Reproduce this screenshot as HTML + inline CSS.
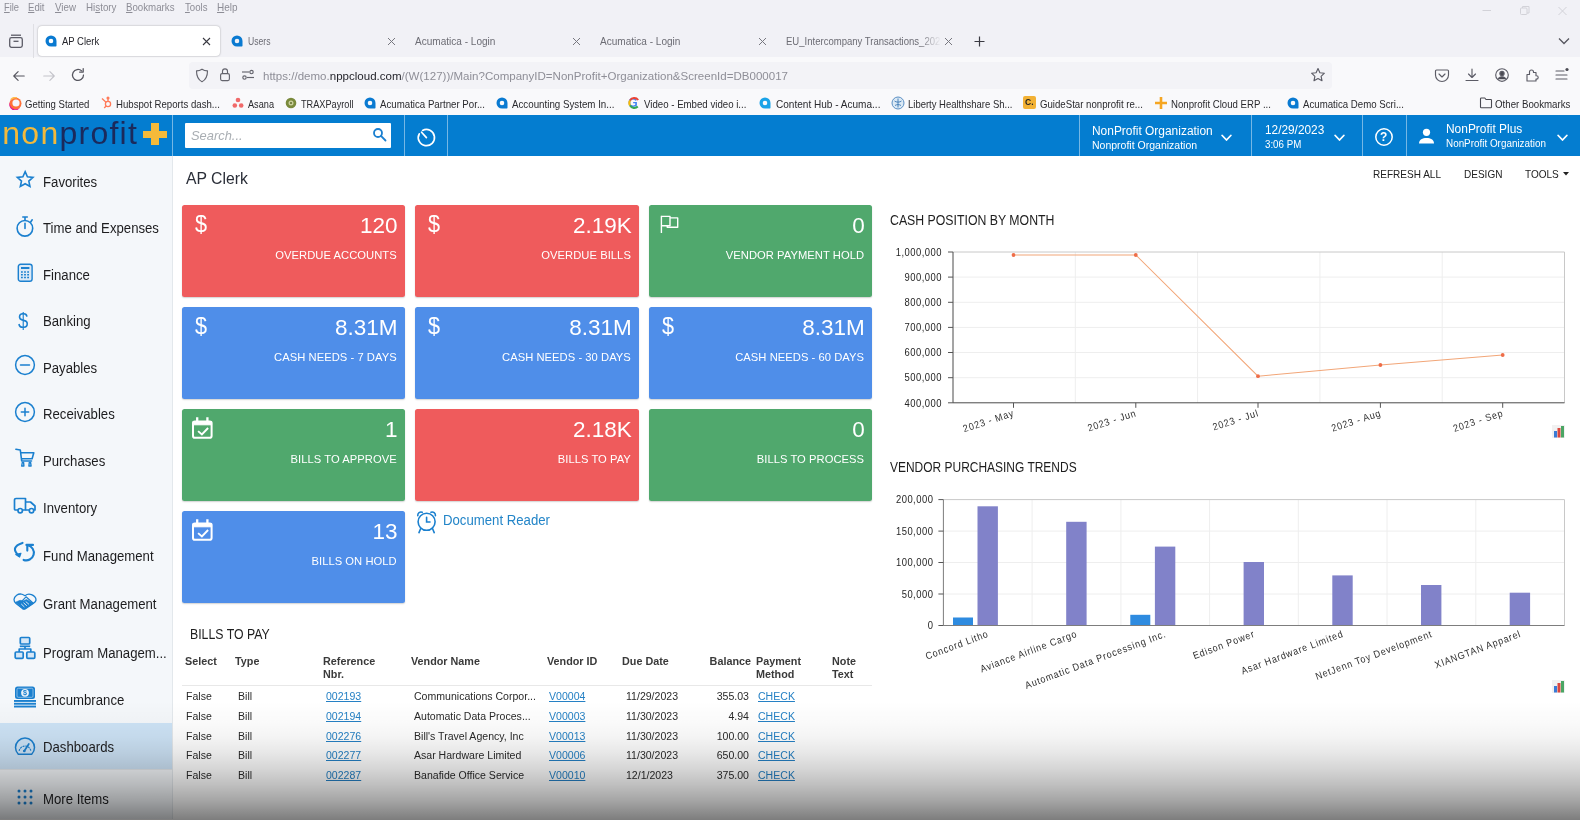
<!DOCTYPE html>
<html lang="en">
<head>
<meta charset="utf-8">
<title>AP Clerk</title>
<style>
*{box-sizing:border-box;margin:0;padding:0}
html,body{width:1580px;height:820px;overflow:hidden;background:#fff}
body{filter:blur(.4px);position:relative;font-family:"Liberation Sans",Arial,sans-serif;color:#222;}
.abs{position:absolute}
.t{position:absolute;white-space:nowrap;line-height:1;transform:scaleX(.955);transform-origin:0 50%}
/* browser chrome */
#chrome{position:absolute;left:0;top:0;width:1580px;height:115px;background:#f1f1f6}
#navbar{position:absolute;left:0;top:57.300px;width:1580px;height:58px;background:#f9f9fb}
#urlbar{position:absolute;left:189px;top:62px;width:1143px;height:27px;border-radius:4px;background:#f3f3f7}
#tab1{position:absolute;left:37.500px;top:25.500px;width:182.500px;height:30px;border-radius:4px;background:#fff;box-shadow:0 0 2px rgba(0,0,0,.35)}
.menu{color:#8d8d96;top:2px}
.tabt{color:#6c6c74;top:37px}
.bm{color:#2a2a2e;top:99.500px}
/* app header */
#hdr{position:absolute;left:0;top:115.400px;width:1580px;height:40.800px;background:#047dd0}
.hsep{position:absolute;top:115.400px;width:1px;height:40.800px;background:rgba(255,255,255,.45)}
.hw{color:#fff}
/* sidebar */
#side{position:absolute;left:0;top:156.200px;width:173px;height:663px;background:#f4f7fa;border-right:1px solid #e3e8ec}
.sit{margin-top:1.600px;font-size:13.800px;color:#1d1d1f;left:42.800px}
#sel{position:absolute;left:0;top:723px;width:172px;height:46px;background:#cde3f6}
/* tiles */
.tile{position:absolute;width:223px;height:92px;border-radius:2.500px;color:#fff;box-shadow:0 1px 1.500px rgba(0,0,0,.18)}
.red{background:#ef5b5c}.grn{background:#50a86d}.blu{background:#4f8ee9}
.tile .v{position:absolute;right:7.500px;top:10px;font-size:22.500px;line-height:1;white-space:nowrap}
.tile .l{position:absolute;right:8.300px;top:45px;font-size:11.200px;letter-spacing:.05px;line-height:1;white-space:nowrap}
.tile svg{position:absolute;left:11px;top:9px}
/* table */
.th{font-size:11.300px;font-weight:bold;color:#3a3a3a;line-height:13px;white-space:nowrap;position:absolute;transform:scaleX(.955);transform-origin:0 50%}
.td{font-size:11.050px;color:#2a2a2a;line-height:1;white-space:nowrap;position:absolute;transform:scaleX(.955);transform-origin:0 50%}
.ra{transform-origin:100% 50%}
.lk{color:#2580c4;text-decoration:underline}
.tb{font-size:10.500px;color:#222}
.tile .ic{left:13px;top:6.500px;font-size:24px;transform:scaleX(.9);transform-origin:left;color:#fff;font-weight:normal}
.hd{font-size:14.300px;color:#1e1e1e;transform:scaleX(.86);transform-origin:left center}
.cl{font-size:10.600px;fill:#262626;letter-spacing:.55px}
.cx{font-size:10px;fill:#2e2e2e;letter-spacing:.9px}
#fade{position:absolute;left:0;top:690px;width:1580px;height:130px;background:linear-gradient(to bottom,rgba(0,0,0,0) 8%,rgba(0,0,0,.018) 24.600%,rgba(0,0,0,.045) 36%,rgba(0,0,0,.095) 48.500%,rgba(0,0,0,.165) 60.800%,rgba(0,0,0,.25) 73%,rgba(0,0,0,.355) 85.400%,rgba(0,0,0,.485) 97.700%,rgba(0,0,0,.51) 100%);pointer-events:none}
</style>
</head>
<body>
<!-- ======= BROWSER CHROME ======= -->
<div id="chrome"></div>
<div id="navbar"></div>
<div id="urlbar"></div>
<div id="tab1"></div>
<!--CHROME-START-->
<!-- menubar -->
<!-- window controls -->
<svg class="abs" style="left:1470px;top:0" width="110" height="22" viewBox="0 0 110 22" fill="none" stroke="#d2d2d8" stroke-width="1">
<path d="M12.500 10.500h8.500"/><rect x="50.500" y="8" width="6.500" height="6.500" rx="1"/><path d="M52.500 8v-1.500h6.500v6.500h-2"/><path d="M88.500 7l8 8M96.500 7l-8 8"/>
</svg>
<!-- firefox view icon -->
<svg class="abs" style="left:8px;top:33px" width="16" height="16" viewBox="0 0 16 16" fill="none" stroke="#5b5b66" stroke-width="1.3"><path d="M3 2.2h10"/><rect x="1.7" y="4.7" width="12.6" height="9.6" rx="1.8"/><path d="M5.5 8.3h5"/></svg>
<div class="abs" style="left:33px;top:24px;width:1px;height:34px;background:#dedee3"></div>
<!-- tabs -->
<svg class="abs" style="left:45.0px;top:35px" width="12" height="12" viewBox="0 0 12 12"><path fill-rule="evenodd" fill="#0a7ad1" d="M6 0.500A5.500 5.500 0 1 0 6 11.500H10.800A.7.700 0 0 0 11.500 10.800V6A5.500 5.500 0 0 0 6 .5zM6 3.700A2.300 2.300 0 1 1 6 8.300A2.300 2.300 0 1 1 6 3.700z"/></svg>
<svg class="abs" style="left:202px;top:37px" width="9" height="9" viewBox="0 0 9 9" stroke="#3a3a42" stroke-width="1.1"><path d="M1 1l7 7M8 1l-7 7"/></svg>
<svg class="abs" style="left:231.0px;top:35px" width="12" height="12" viewBox="0 0 12 12"><path fill-rule="evenodd" fill="#0a7ad1" d="M6 0.500A5.500 5.500 0 1 0 6 11.500H10.800A.7.700 0 0 0 11.500 10.800V6A5.500 5.500 0 0 0 6 .5zM6 3.700A2.300 2.300 0 1 1 6 8.300A2.300 2.300 0 1 1 6 3.700z"/></svg>
<svg class="abs" style="left:387px;top:37px" width="9" height="9" viewBox="0 0 9 9" stroke="#77777f" stroke-width="1"><path d="M1 1l7 7M8 1l-7 7"/></svg>
<svg class="abs" style="left:572px;top:37px" width="9" height="9" viewBox="0 0 9 9" stroke="#77777f" stroke-width="1"><path d="M1 1l7 7M8 1l-7 7"/></svg>
<svg class="abs" style="left:758px;top:37px" width="9" height="9" viewBox="0 0 9 9" stroke="#77777f" stroke-width="1"><path d="M1 1l7 7M8 1l-7 7"/></svg>
<svg class="abs" style="left:944px;top:37px" width="9" height="9" viewBox="0 0 9 9" stroke="#77777f" stroke-width="1"><path d="M1 1l7 7M8 1l-7 7"/></svg>
<svg class="abs" style="left:974px;top:36px" width="11" height="11" viewBox="0 0 11 11" stroke="#3a3a42" stroke-width="1.2"><path d="M5.5 0.5v10M0.5 5.5h10"/></svg>
<svg class="abs" style="left:1558px;top:37px" width="12" height="8" viewBox="0 0 12 8" fill="none" stroke="#55555e" stroke-width="1.250"><path d="M1 1.5l5 5 5-5"/></svg>
<!-- nav buttons -->
<svg class="abs" style="left:12px;top:69px" width="14" height="14" viewBox="0 0 16 16" fill="none" stroke="#55555e" stroke-width="1.250" stroke-linecap="round" stroke-linejoin="round"><path d="M14 8H2.5M7 3L2 8l5 5"/></svg>
<svg class="abs" style="left:42px;top:69px" width="14" height="14" viewBox="0 0 16 16" fill="none" stroke="#c3c3ca" stroke-width="1.3" stroke-linecap="round" stroke-linejoin="round"><path d="M2 8h11.5M9 3l5 5-5 5"/></svg>
<svg class="abs" style="left:70px;top:67px" width="16" height="16" viewBox="0 0 16 16" fill="none" stroke="#55555e" stroke-width="1.250" stroke-linecap="round" stroke-linejoin="round"><path d="M13.5 8a5.5 5.5 0 1 1-1.8-4.1"/><path d="M13.2 1.5v3.6H9.6" /></svg>
<!-- urlbar icons -->
<svg class="abs" style="left:195px;top:68px" width="14" height="15" viewBox="0 0 14 15" fill="none" stroke="#64646d" stroke-width="1.150" stroke-linejoin="round"><path d="M7 1.2c1.8 1.3 3.6 1.7 5.5 1.7 0 5-1.4 8.6-5.5 10.8C2.9 11.500 1.500 7.900 1.500 2.900 3.400 2.900 5.200 2.500 7 1.200z"/></svg>
<svg class="abs" style="left:219px;top:67px" width="12" height="15" viewBox="0 0 12 15" fill="none" stroke="#64646d" stroke-width="1.150"><rect x="1.6" y="6.600" width="8.8" height="7" rx="1.500"/><path d="M3.500 6.500V4.300a2.500 2.500 0 0 1 5 0v2.200"/></svg>
<svg class="abs" style="left:241px;top:69px" width="14" height="12" viewBox="0 0 14 12" fill="none" stroke="#64646d" stroke-width="1.150"><path d="M1 3h7"/><circle cx="10.500" cy="3" r="1.700"/><path d="M13 8.500H6"/><circle cx="3.500" cy="8.500" r="1.700"/></svg>
<svg class="abs" style="left:1310px;top:67px" width="16" height="16" viewBox="0 0 16 16" fill="none" stroke="#5c5c66" stroke-width="1.150" stroke-linejoin="round"><path d="M8 1.600l1.900 4.100 4.500.5-3.300 3.100.900 4.400L8 11.500l-4 2.200.900-4.400L1.600 6.200l4.500-.5z"/></svg>
<!-- toolbar right icons -->
<svg class="abs" style="left:1434px;top:68px" width="16" height="15" viewBox="0 0 16 15" fill="none" stroke="#5c5c66" stroke-width="1.150" stroke-linecap="round" stroke-linejoin="round"><path d="M2.500 2h11a1 1 0 0 1 1 1v4a6.500 6.500 0 0 1-13 0V3a1 1 0 0 1 1-1z"/><path d="M5 6l3 3 3-3"/></svg>
<svg class="abs" style="left:1464px;top:67px" width="16" height="16" viewBox="0 0 16 16" fill="none" stroke="#5c5c66" stroke-width="1.150" stroke-linecap="round" stroke-linejoin="round"><path d="M8 2v8M4.500 7L8 10.500 11.500 7M2 13.500h12"/></svg>
<svg class="abs" style="left:1494px;top:67px" width="16" height="16" viewBox="0 0 16 16" fill="none" stroke="#5c5c66" stroke-width="1.150"><circle cx="8" cy="8" r="6.300"/><circle cx="8" cy="6.500" r="2.100" fill="#4a4a52"/><path d="M4 12.300c.8-2 2.300-2.600 4-2.600s3.200.6 4 2.600" fill="#4a4a52"/></svg>
<svg class="abs" style="left:1524px;top:67px" width="16" height="16" viewBox="0 0 16 16" fill="none" stroke="#5c5c66" stroke-width="1.150" stroke-linejoin="round"><path d="M3 14V7.500h2.500V5a2 2 0 0 1 4 0v.5H12v3.200h.5a1.700 1.700 0 0 1 0 3.400H12V14z"/></svg>
<svg class="abs" style="left:1554px;top:66px" width="16" height="16" viewBox="0 0 16 16" fill="none" stroke="#5c5c66" stroke-width="1.150" stroke-linecap="round"><path d="M2 5h8M2 9h11M2 13h11"/><circle cx="13" cy="3.500" r="1.600" fill="#4a4a52" stroke="none"/></svg>
<!-- bookmarks -->
<svg class="abs" style="left:8.800px;top:96.500px" width="13" height="13" viewBox="0 0 13 13"><circle cx="6.500" cy="6.500" r="6" fill="#ff7139"/><circle cx="7" cy="6" r="3.600" fill="#f5f5fa"/><path d="M1 5a6 6 0 0 0 10 5.500A5.500 5.500 0 0 1 1 5z" fill="#e31587"/><path d="M2 2.500a6 6 0 0 1 6-1.800" stroke="#ffbd4f" stroke-width="1.500" fill="none"/></svg>
<svg class="abs" style="left:100px;top:96px" width="13" height="13" viewBox="0 0 13 13" fill="none" stroke="#ff7a59" stroke-width="1.300"><circle cx="8" cy="8" r="2.600"/><path d="M8 5.400V2.500M6 6.200L2 2.500M6.200 10l-2 2"/><circle cx="8" cy="2" r=".9" fill="#ff7a59"/></svg>
<svg class="abs" style="left:232px;top:97px" width="12" height="12" viewBox="0 0 12 12" fill="#f06a6a"><circle cx="6" cy="3" r="2.300"/><circle cx="2.800" cy="8.500" r="2.300"/><circle cx="9.200" cy="8.500" r="2.300"/></svg>
<svg class="abs" style="left:285px;top:97px" width="12" height="12" viewBox="0 0 12 12"><circle cx="6" cy="6" r="5.300" fill="#7a8a3c"/><circle cx="6" cy="6" r="2.500" fill="#c9cf9a"/><circle cx="6" cy="6" r="1" fill="#5e6b2a"/></svg>
<svg class="abs" style="left:364.3px;top:97px" width="12" height="12" viewBox="0 0 12 12"><path fill-rule="evenodd" fill="#0a7ad1" d="M6 0.500A5.500 5.500 0 1 0 6 11.500H10.800A.7.700 0 0 0 11.500 10.800V6A5.500 5.500 0 0 0 6 .5zM6 3.700A2.300 2.300 0 1 1 6 8.300A2.300 2.300 0 1 1 6 3.700z"/></svg>
<svg class="abs" style="left:496.3px;top:97px" width="12" height="12" viewBox="0 0 12 12"><path fill-rule="evenodd" fill="#0a7ad1" d="M6 0.500A5.500 5.500 0 1 0 6 11.500H10.800A.7.700 0 0 0 11.500 10.800V6A5.500 5.500 0 0 0 6 .5zM6 3.700A2.300 2.300 0 1 1 6 8.300A2.300 2.300 0 1 1 6 3.700z"/></svg>
<div class="t" style="left:628px;top:96px;font-size:13px;font-weight:bold;color:#4285f4">G</div>
<svg class="abs" style="left:628px;top:97px" width="12" height="12" viewBox="0 0 12 12" fill="none" stroke-width="2"><path d="M10.200 3A5 5 0 0 0 2 3.500" stroke="#ea4335"/><path d="M2 3.500a5 5 0 0 0 0 5" stroke="#fbbc05"/><path d="M2 8.500A5 5 0 0 0 9.800 9.500" stroke="#34a853"/></svg>
<svg class="abs" style="left:759.3px;top:97px" width="12" height="12" viewBox="0 0 12 12"><path fill-rule="evenodd" fill="#1aa3e8" d="M6 0.500A5.500 5.500 0 1 0 6 11.500H10.800A.7.700 0 0 0 11.500 10.800V6A5.500 5.500 0 0 0 6 .5zM6 3.700A2.300 2.300 0 1 1 6 8.300A2.300 2.300 0 1 1 6 3.700z"/></svg>
<svg class="abs" style="left:891px;top:96px" width="14" height="14" viewBox="0 0 14 14"><circle cx="7" cy="7" r="6" fill="#dbe9f5" stroke="#5b8fc4" stroke-width="1"/><path d="M7 2.500v9M3.500 5c1.500 1.500 5.500 1.500 7 0M4 9.500c1.500-1.200 4.500-1.200 6 0" stroke="#3c78b4" stroke-width=".9" fill="none"/></svg>
<div class="abs" style="left:1023px;top:96px;width:13px;height:13px;background:#f2b134;border-radius:2px"></div>
<div class="t" style="left:1025px;top:98px;font-size:9px;font-weight:bold;color:#222">C.</div>
<svg class="abs" style="left:1155px;top:97px" width="12" height="12" viewBox="0 0 12 12" stroke="#f5a623" stroke-width="2.600"><path d="M6 0v12M0 6h12"/></svg>
<svg class="abs" style="left:1287.3px;top:97px" width="12" height="12" viewBox="0 0 12 12"><path fill-rule="evenodd" fill="#0a7ad1" d="M6 0.500A5.500 5.500 0 1 0 6 11.500H10.800A.7.700 0 0 0 11.500 10.800V6A5.500 5.500 0 0 0 6 .5zM6 3.700A2.300 2.300 0 1 1 6 8.300A2.300 2.300 0 1 1 6 3.700z"/></svg>
<svg class="abs" style="left:1479px;top:96px" width="14" height="13" viewBox="0 0 14 13" fill="none" stroke="#4a4a52" stroke-width="1.100" stroke-linejoin="round"><path d="M1.500 3.500V11a.8.800 0 0 0 .8.800h9.400a.8.800 0 0 0 .8-.8V4.300a.8.800 0 0 0-.8-.8H7L5.800 2H2.300a.8.800 0 0 0-.8.800z"/></svg>
<!--CHROME-END-->
<!--CHROMETEXT-START-->
<div class="t menu" style="left:3.6px;font-size:10.8px;transform:scaleX(0.862);"><u>F</u>ile</div>
<div class="t menu" style="left:28.1px;font-size:10.8px;transform:scaleX(0.887);"><u>E</u>dit</div>
<div class="t menu" style="left:54.6px;font-size:10.8px;transform:scaleX(0.905);"><u>V</u>iew</div>
<div class="t menu" style="left:85.6px;font-size:10.8px;transform:scaleX(0.908);">Hi<u>s</u>tory</div>
<div class="t menu" style="left:126.1px;font-size:10.8px;transform:scaleX(0.898);"><u>B</u>ookmarks</div>
<div class="t menu" style="left:184.6px;font-size:10.8px;transform:scaleX(0.892);"><u>T</u>ools</div>
<div class="t menu" style="left:216.6px;font-size:10.8px;transform:scaleX(0.923);"><u>H</u>elp</div>
<div class="t tabt" style="left:62.1px;font-size:10.4px;transform:scaleX(0.913);color:#26262c">AP Clerk</div>
<div class="t tabt" style="left:247.6px;font-size:10.4px;transform:scaleX(0.829);">Users</div>
<div class="t tabt" style="left:414.6px;font-size:10.4px;transform:scaleX(0.967);">Acumatica - Login</div>
<div class="t tabt" style="left:600.1px;font-size:10.4px;transform:scaleX(0.967);">Acumatica - Login</div>
<div class="t tabt" style="left:785.600px;font-size:10.400px;transform:scaleX(0.918);width:168.8px;overflow:hidden;-webkit-mask-image:linear-gradient(to right,#000 86%,transparent);mask-image:linear-gradient(to right,#000 86%,transparent)">EU_Intercompany Transactions_2023</div>
<div class="t" style="left:263.200px;top:71px;font-size:11.400px;color:#8e8e97;transform:scaleX(1.013)">https://demo.<span style="color:#1f1f26">nppcloud.com</span>/(W(127))/Main?CompanyID=NonProfit+Organization&amp;ScreenId=DB000017</div>
<div class="t bm" style="left:25.1px;font-size:10.4px;transform:scaleX(0.922);">Getting Started</div>
<div class="t bm" style="left:116.1px;font-size:10.4px;transform:scaleX(0.927);">Hubspot Reports dash...</div>
<div class="t bm" style="left:248.1px;font-size:10.4px;transform:scaleX(0.882);">Asana</div>
<div class="t bm" style="left:301.1px;font-size:10.4px;transform:scaleX(0.882);">TRAXPayroll</div>
<div class="t bm" style="left:380.1px;font-size:10.4px;transform:scaleX(0.932);">Acumatica Partner Por...</div>
<div class="t bm" style="left:512.1px;font-size:10.4px;transform:scaleX(0.938);">Accounting System In...</div>
<div class="t bm" style="left:643.6px;font-size:10.4px;transform:scaleX(0.930);">Video - Embed video i...</div>
<div class="t bm" style="left:775.6px;font-size:10.4px;transform:scaleX(0.967);">Content Hub - Acuma...</div>
<div class="t bm" style="left:907.6px;font-size:10.4px;transform:scaleX(0.913);">Liberty Healthshare Sh...</div>
<div class="t bm" style="left:1039.6px;font-size:10.4px;transform:scaleX(0.928);">GuideStar nonprofit re...</div>
<div class="t bm" style="left:1171.1px;font-size:10.4px;transform:scaleX(0.927);">Nonprofit Cloud ERP ...</div>
<div class="t bm" style="left:1303.1px;font-size:10.4px;transform:scaleX(0.930);">Acumatica Demo Scri...</div>
<div class="t bm" style="left:1495.1px;font-size:10.4px;transform:scaleX(0.933);">Other Bookmarks</div>
<!--CHROMETEXT-END-->
<!-- ======= APP HEADER ======= -->
<div id="hdr"></div>
<!--HEADER-START-->
<!-- logo -->
<div class="t" style="left:2.300px;top:113px;font-size:32px;letter-spacing:1.250px;color:#f2b93b;line-height:40px;transform:none" id="logo">non<span style="color:#1b2a5c">profit</span></div>
<div class="abs" style="left:143.300px;top:131px;width:23.600px;height:6.800px;background:#f5ba3a"></div>
<div class="abs" style="left:151.300px;top:123.400px;width:7.600px;height:21.900px;background:#f5ba3a"></div>
<div class="hsep" style="left:172px"></div>
<!-- search -->
<div class="abs" style="left:185.200px;top:123.300px;width:206px;height:24.400px;background:#fff;border-radius:1px"></div>
<div class="t" style="left:191px;top:129px;font-size:13.500px;font-style:italic;color:#a9aeb3">Search...</div>
<svg class="abs" style="left:372px;top:127px" width="15" height="15" viewBox="0 0 15 15" fill="none" stroke="#1a7fd0" stroke-width="1.800" stroke-linecap="round"><circle cx="6" cy="6" r="4"/><path d="M9.200 9.200l4.300 4.300"/></svg>
<div class="hsep" style="left:404px"></div>
<svg class="abs" style="left:415.500px;top:127px" width="21" height="21" viewBox="0 0 21 21" fill="none" stroke="#fff" stroke-width="1.700" stroke-linecap="round"><path d="M6.60 3.45A8.1 8.1 0 1 1 3.25 6.80"/><path d="M10.4 10.6L5.58 5.25"/></svg>
<div class="hsep" style="left:447px"></div>
<!-- right side -->
<div class="hsep" style="left:1079px"></div>
<div class="t hw" style="left:1092px;top:125px;font-size:12.500px" id="org1">NonProfit Organization</div>
<div class="t hw" style="left:1092px;top:140px;font-size:11px" id="org2">Nonprofit Organization</div>
<svg class="abs" style="left:1221px;top:134px" width="11" height="8" viewBox="0 0 11 8" fill="none" stroke="#fff" stroke-width="1.800" stroke-linecap="round" stroke-linejoin="round"><path d="M1.200 1.500l4.300 4.500 4.300-4.500"/></svg>
<div class="hsep" style="left:1251px"></div>
<div class="t hw" style="left:1265px;top:124px;font-size:12.400px">12/29/2023</div>
<div class="t hw" style="left:1265px;top:140px;font-size:10.200px">3:06 PM</div>
<svg class="abs" style="left:1334px;top:134px" width="11" height="8" viewBox="0 0 11 8" fill="none" stroke="#fff" stroke-width="1.800" stroke-linecap="round" stroke-linejoin="round"><path d="M1.200 1.500l4.300 4.500 4.300-4.500"/></svg>
<div class="hsep" style="left:1362px"></div>
<svg class="abs" style="left:1374px;top:127px" width="20" height="20" viewBox="0 0 20 20" fill="none" stroke="#fff" stroke-width="1.500"><circle cx="10" cy="10" r="8.200"/></svg>
<div class="t hw" style="left:1380px;top:131px;font-size:12.500px;font-weight:bold">?</div>
<div class="hsep" style="left:1406px"></div>
<svg class="abs" style="left:1418px;top:128px" width="17" height="16" viewBox="0 0 17 16" fill="#fff"><circle cx="8.500" cy="4.300" r="3.600"/><path d="M1 15.500c0-4 3.500-5.500 7.500-5.500s7.500 1.500 7.500 5.500z"/></svg>
<div class="t hw" style="left:1446px;top:123px;font-size:12.500px">NonProfit Plus</div>
<div class="t hw" style="left:1446px;top:139px;font-size:10.350px">NonProfit Organization</div>
<svg class="abs" style="left:1557px;top:134px" width="11" height="8" viewBox="0 0 11 8" fill="none" stroke="#fff" stroke-width="1.800" stroke-linecap="round" stroke-linejoin="round"><path d="M1.200 1.500l4.300 4.500 4.300-4.500"/></svg>
<!--HEADER-END-->
<!-- ======= SIDEBAR ======= -->
<div id="side"></div>
<div id="sel"></div>
<!--SIDEBAR-START-->
<div class="abs" style="left:0;top:769px;width:172px;height:1px;background:#e4e8ec"></div>
<!-- icons -->
<svg class="abs" style="left:14.600px;top:169px" width="21" height="20" viewBox="0 0 21 20" fill="none" stroke="#1b80cf" stroke-width="1.600" stroke-linejoin="miter"><path d="M10.15 2.70 L12.42 7.78 L17.95 8.37 L13.82 12.09 L14.97 17.53 L10.15 14.75 L5.33 17.53 L6.48 12.09 L2.35 8.37 L7.88 7.78z"/></svg>
<div class="t sit" style="top:174px">Favorites</div>
<svg class="abs" style="left:15px;top:215px" width="20" height="23" viewBox="0 0 20 23" fill="none" stroke="#1b80cf" stroke-width="1.600" stroke-linecap="round"><circle cx="9.900" cy="13.300" r="7.800"/><path d="M10 8.300v5.200M7.800 2h4.500M10 2.200v3M17.200 4.800l-1.500 2.200"/></svg>
<div class="t sit" style="top:220px">Time and Expenses</div>
<svg class="abs" style="left:16.800px;top:262.500px" width="17" height="20" viewBox="0 0 17 20" fill="#dbe9f6" stroke="#1b80cf"><rect x="1.300" y="1.300" width="13.800" height="17" rx="2.300" stroke-width="1.400"/><path d="M4 5h8.400" stroke-width="2" fill="none"/><path d="M4 9h8.800M4 11.800h8.800M4 14.600h8.800" stroke-width="1.500" stroke-dasharray="1.800 1.300" fill="none"/></svg>
<div class="t sit" style="top:267px">Finance</div>
<div class="t" style="left:18px;top:309.500px;font-size:22px;color:#1b80cf;transform:scaleX(.84);transform-origin:left">$</div>
<div class="t sit" style="top:313px">Banking</div>
<svg class="abs" style="left:13.700px;top:354.200px" width="22" height="22" viewBox="0 0 22 22" fill="none" stroke="#1b80cf" stroke-width="1.500" stroke-linecap="round"><circle cx="11" cy="11" r="9.400"/><path d="M6.500 11h9"/></svg>
<div class="t sit" style="top:360px">Payables</div>
<svg class="abs" style="left:13.700px;top:401.200px" width="22" height="22" viewBox="0 0 22 22" fill="none" stroke="#1b80cf" stroke-width="1.500" stroke-linecap="round"><circle cx="11" cy="11" r="9.400"/><path d="M7.300 11h7.400M11 7.300v7.400"/></svg>
<div class="t sit" style="top:406px">Receivables</div>
<svg class="abs" style="left:14.500px;top:448px" width="20" height="20" viewBox="0 0 20 20" fill="none" stroke="#1b80cf" stroke-width="1.600" stroke-linejoin="round" stroke-linecap="round"><path d="M0.900 1.200L5.300 2 6.700 13h9.800M5.800 4.800h13l-1.700 6H6.500"/><path d="M7.300 14.500l-.6 3.500h2.200l-.3-3.500M14.300 14.500l-.4 3.500h2.200l-.5-3.500" stroke-width="1.400"/></svg>
<div class="t sit" style="top:453px">Purchases</div>
<svg class="abs" style="left:13px;top:497px" width="24" height="18" viewBox="0 0 24 18" fill="none" stroke="#1b80cf" stroke-width="1.700" stroke-linejoin="round"><path d="M5 13H2.500a1 1 0 0 1-1-1V3a1.500 1.500 0 0 1 1.500-1.500h9.500V13H9.500"/><path d="M12.500 5h5l4.500 4v4h-1.500M12.500 13h4"/><circle cx="7.200" cy="13.700" r="2.200"/><circle cx="18.500" cy="13.700" r="2.200"/></svg>
<div class="t sit" style="top:500px">Inventory</div>
<svg class="abs" style="left:13px;top:541px" width="23" height="22" viewBox="0 0 23 22" fill="none" stroke="#1b80cf" stroke-width="2.100" stroke-linecap="round" stroke-linejoin="round"><path d="M9.500 1.900Q-3.300 6 5.600 14.600"/><path d="M2.800 13.600L6.600 16 7.900 12.300z" fill="#1b80cf" stroke-width="1.200"/><path d="M14.600 4.300A7.600 7.600 0 1 1 10.600 18.900"/><path d="M13.400 3.900H20M14.300 3.900V9.600"/></svg>
<div class="t sit" style="top:548px">Fund Management</div>
<svg class="abs" style="left:13px;top:591.500px" width="24" height="18" viewBox="0 0 24 18" fill="none" stroke="#1b80cf" stroke-width="1.300" stroke-linejoin="round" stroke-linecap="round"><path d="M1 7.500C1.500 4 5 1.500 8.500 2.100C10 2.300 11 3.200 12 3.700C13.500 2.500 16 1.700 18.500 2.700C21 3.700 23 6 23 8C23 9.500 21 11 19.500 12L12.500 16.600C11.500 17.300 10.500 17.300 9.500 16.600L3 11.500C1.500 10.300 1 9 1 7.500z"/><path d="M2.500 10.200L7 8.300 10.500 8.800 13.500 7.500 20.500 11.300 12.500 16.500C11.500 17.200 10.500 17.200 9.500 16.500z" fill="#1b80cf" stroke-width=".6"/><path d="M9.600 8.300L13 4.800 20 11" stroke-width="1.200"/><path d="M8.500 12.200l2.600 2.500M10.800 11l2.700 2.500M13 9.800l2.700 2.300" stroke="#e6f0f9" stroke-width=".9"/></svg>
<div class="t sit" style="top:596px">Grant Management</div>
<svg class="abs" style="left:14px;top:636px" width="22" height="24" viewBox="0 0 22 24" fill="#d6e7f6" stroke="#1b80cf" stroke-width="1.700" stroke-linejoin="round"><rect x="6.300" y="1.500" width="9.400" height="6.500" rx="1"/><path d="M5.800 10.300h10.400" fill="none"/><path d="M11 10.300V13M5.200 16v-3h11.600v3" fill="none"/><rect x="1.200" y="16" width="8" height="6.300" rx="1"/><rect x="12.800" y="16" width="8" height="6.300" rx="1"/></svg>
<div class="t sit" style="top:645px">Program Managem...</div>
<svg class="abs" style="left:13px;top:685.500px" width="24" height="22" viewBox="0 0 24 22" fill="#1b80cf"><rect x="2" y="0.500" width="20" height="12.500" rx="2.500"/><rect x="4" y="2.300" width="16" height="9" rx="1.300" fill="none" stroke="#9cc6ea" stroke-width=".8"/><circle cx="12" cy="6.800" r="3.900" fill="#e9f1f9"/><rect x="1" y="14" width="22" height="1.900"/><rect x="1" y="16.800" width="22" height="1.900"/><rect x="1" y="19.600" width="22" height="1.900"/></svg>
<div class="t" style="left:22.800px;top:688.500px;font-size:7.500px;font-weight:bold;color:#1b80cf">$</div>
<div class="t sit" style="top:692px">Encumbrance</div>
<svg class="abs" style="left:14px;top:735px" width="22" height="22" viewBox="0 0 22 22" fill="none" stroke="#1b80cf" stroke-width="1.500" stroke-linecap="round"><path d="M4.300 19.300a9.500 9.500 0 1 1 13.400 0z" stroke-linejoin="round"/><path d="M5.200 15.500a6 6 0 0 1 11.600 0" stroke-width="1.100" stroke-dasharray="1.200 1.600"/><path d="M10.300 16L14.800 9" stroke-width="1.700"/><circle cx="10.300" cy="16" r="1.300" fill="#1b80cf" stroke="none"/></svg>
<div class="t sit" style="top:739px">Dashboards</div>
<svg class="abs" style="left:17px;top:789px" width="16" height="16" viewBox="0 0 16 16" fill="#1b80cf"><circle cx="2" cy="2" r="1.500"/><circle cx="8" cy="2" r="1.500"/><circle cx="14" cy="2" r="1.500"/><circle cx="2" cy="8" r="1.500"/><circle cx="8" cy="8" r="1.500"/><circle cx="14" cy="8" r="1.500"/><circle cx="2" cy="14" r="1.500"/><circle cx="8" cy="14" r="1.500"/><circle cx="14" cy="14" r="1.500"/></svg>
<div class="t sit" style="top:791px">More Items</div>
<!--SIDEBAR-END-->
<!-- ======= MAIN ======= -->
<!--MAIN-START-->
<div class="t" id="title" style="left:185.600px;top:170px;font-size:16.500px;color:#2a2e38">AP Clerk</div>
<div class="t tb" style="left:1373px;top:169px">REFRESH ALL</div>
<div class="t tb" style="left:1464px;top:169px">DESIGN</div>
<div class="t tb" style="left:1525px;top:169px">TOOLS</div>
<svg class="abs" style="left:1563px;top:172px" width="6" height="4" viewBox="0 0 6 4"><path d="M0 0h6L3 3.500z" fill="#222"/></svg>
<div class="tile red" style="left:182px;top:205px;width:223px"><div class="t ic">$</div><div class="v">120</div><div class="l">OVERDUE ACCOUNTS</div></div>
<div class="tile red" style="left:415.2px;top:205px;width:224px"><div class="t ic">$</div><div class="v">2.19K</div><div class="l">OVERDUE BILLS</div></div>
<div class="tile grn" style="left:649.2px;top:205px;width:223.2px"><svg width="20" height="20" viewBox="0 0 20 20" fill="none" stroke="#fff" stroke-width="1.400" stroke-linejoin="round"><path d="M1.400 1.800V19"/><path d="M1.400 2.400H10v9.400H1.400"/><path d="M10 3.900h7.700v9.300H7.200v-1.400"/></svg><div class="v">0</div><div class="l">VENDOR PAYMENT HOLD</div></div>
<div class="tile blu" style="left:182px;top:307px;width:223px"><div class="t ic">$</div><div class="v">8.31M</div><div class="l">CASH NEEDS - 7 DAYS</div></div>
<div class="tile blu" style="left:415.2px;top:307px;width:224px"><div class="t ic">$</div><div class="v">8.31M</div><div class="l">CASH NEEDS - 30 DAYS</div></div>
<div class="tile blu" style="left:649.2px;top:307px;width:223.2px"><div class="t ic">$</div><div class="v">8.31M</div><div class="l">CASH NEEDS - 60 DAYS</div></div>
<div class="tile grn" style="left:182px;top:409px;width:223px"><svg style="left:9.600px;top:8px" width="21" height="22" viewBox="0 0 21 22" fill="none" stroke="#fff"><rect x="1" y="4.500" width="18.600" height="16.200" rx="1.800" stroke-width="2"/><path d="M1 4.500h18.600v3.300H1z" fill="#fff" stroke-width="1"/><path d="M5.200 0.300v4.500M15.400 0.300v4.500" stroke-width="2.300"/><path d="M6.100 14.100l3.800 3.300 6.200-6.400" stroke-width="1.900"/></svg><div class="v">1</div><div class="l">BILLS TO APPROVE</div></div>
<div class="tile red" style="left:415.2px;top:409px;width:224px"><div class="v">2.18K</div><div class="l">BILLS TO PAY</div></div>
<div class="tile grn" style="left:649.2px;top:409px;width:223.2px"><div class="v">0</div><div class="l">BILLS TO PROCESS</div></div>
<div class="tile blu" style="left:182px;top:511px;width:223px"><svg style="left:9.600px;top:8px" width="21" height="22" viewBox="0 0 21 22" fill="none" stroke="#fff"><rect x="1" y="4.500" width="18.600" height="16.200" rx="1.800" stroke-width="2"/><path d="M1 4.500h18.600v3.300H1z" fill="#fff" stroke-width="1"/><path d="M5.200 0.300v4.500M15.400 0.300v4.500" stroke-width="2.300"/><path d="M6.100 14.100l3.800 3.300 6.200-6.400" stroke-width="1.900"/></svg><div class="v">13</div><div class="l">BILLS ON HOLD</div></div>
<svg class="abs" style="left:416px;top:511px" width="22" height="23" viewBox="0 0 22 23" fill="none" stroke="#1b80cf" stroke-width="1.600" stroke-linecap="round"><circle cx="10.600" cy="10.800" r="8.500"/><path d="M10.600 6.200V11H14"/><path d="M1.800 4.600A3.200 3.200 0 0 1 6.200 1.300M19.400 4.600A3.200 3.200 0 0 0 15 1.300M4.600 17.800L3 21.600M16.600 17.800L18.200 21.600"/></svg>
<div class="t" id="docr" style="left:443px;top:514px;font-size:13.800px;color:#2385c8">Document Reader</div>
<div class="t hd" id="h_bills" style="left:190px;top:627px">BILLS TO PAY</div>
<div class="th" style="left:185px;top:654.500px">Select</div>
<div class="th" style="left:235px;top:654.500px">Type</div>
<div class="th" style="left:323px;top:654.500px">Reference<br>Nbr.</div>
<div class="th" style="left:411px;top:654.500px">Vendor Name</div>
<div class="th" style="left:547px;top:654.500px">Vendor ID</div>
<div class="th" style="left:622px;top:654.500px">Due Date</div>
<div class="th" style="left:756px;top:654.500px">Payment<br>Method</div>
<div class="th" style="left:832px;top:654.500px">Note<br>Text</div>
<div class="th ra" style="left:651px;width:100px;text-align:right;top:654.500px">Balance</div>
<div class="abs" style="left:182px;top:685px;width:690px;height:1px;background:#e8e8e8"></div>
<div class="td" style="left:186px;top:691.0px">False</div>
<div class="td" style="left:238px;top:691.0px">Bill</div>
<div class="td lk" style="left:326px;top:691.0px">002193</div>
<div class="td" style="left:414px;top:691.0px">Communications Corpor...</div>
<div class="td lk" style="left:549px;top:691.0px">V00004</div>
<div class="td" style="left:626px;top:691.0px">11/29/2023</div>
<div class="td ra" style="left:649px;width:100px;text-align:right;top:691.0px">355.03</div>
<div class="td lk" style="left:758px;top:691.0px">CHECK</div>
<div class="td" style="left:186px;top:711.0px">False</div>
<div class="td" style="left:238px;top:711.0px">Bill</div>
<div class="td lk" style="left:326px;top:711.0px">002194</div>
<div class="td" style="left:414px;top:711.0px">Automatic Data Proces...</div>
<div class="td lk" style="left:549px;top:711.0px">V00003</div>
<div class="td" style="left:626px;top:711.0px">11/30/2023</div>
<div class="td ra" style="left:649px;width:100px;text-align:right;top:711.0px">4.94</div>
<div class="td lk" style="left:758px;top:711.0px">CHECK</div>
<div class="td" style="left:186px;top:731.0px">False</div>
<div class="td" style="left:238px;top:731.0px">Bill</div>
<div class="td lk" style="left:326px;top:731.0px">002276</div>
<div class="td" style="left:414px;top:731.0px">Bill's Travel Agency, Inc</div>
<div class="td lk" style="left:549px;top:731.0px">V00013</div>
<div class="td" style="left:626px;top:731.0px">11/30/2023</div>
<div class="td ra" style="left:649px;width:100px;text-align:right;top:731.0px">100.00</div>
<div class="td lk" style="left:758px;top:731.0px">CHECK</div>
<div class="td" style="left:186px;top:750.0px">False</div>
<div class="td" style="left:238px;top:750.0px">Bill</div>
<div class="td lk" style="left:326px;top:750.0px">002277</div>
<div class="td" style="left:414px;top:750.0px">Asar Hardware Limited</div>
<div class="td lk" style="left:549px;top:750.0px">V00006</div>
<div class="td" style="left:626px;top:750.0px">11/30/2023</div>
<div class="td ra" style="left:649px;width:100px;text-align:right;top:750.0px">650.00</div>
<div class="td lk" style="left:758px;top:750.0px">CHECK</div>
<div class="td" style="left:186px;top:770.0px">False</div>
<div class="td" style="left:238px;top:770.0px">Bill</div>
<div class="td lk" style="left:326px;top:770.0px">002287</div>
<div class="td" style="left:414px;top:770.0px">Banafide Office Service</div>
<div class="td lk" style="left:549px;top:770.0px">V00010</div>
<div class="td" style="left:626px;top:770.0px">12/1/2023</div>
<div class="td ra" style="left:649px;width:100px;text-align:right;top:770.0px">375.00</div>
<div class="td lk" style="left:758px;top:770.0px">CHECK</div>
<!--MAIN-END-->
<!--CHARTS-START-->
<div class="t hd" id="h_cash" style="left:890px;top:213px">CASH POSITION BY MONTH</div>
<div class="t hd" id="h_vend" style="left:890px;top:460px;transform:scaleX(.837)">VENDOR PURCHASING TRENDS</div>
<svg class="abs" style="left:880px;top:235px" width="700" height="470" viewBox="880 235 700 470" font-family="Liberation Sans, Arial, sans-serif">
<rect x="953" y="252" width="611.5" height="150.8" fill="#fff"/>
<path d="M953 277.1H1564.5" stroke="#eeeeee" stroke-width="1"/>
<path d="M953 302.3H1564.5" stroke="#eeeeee" stroke-width="1"/>
<path d="M953 327.4H1564.5" stroke="#eeeeee" stroke-width="1"/>
<path d="M953 352.5H1564.5" stroke="#eeeeee" stroke-width="1"/>
<path d="M953 377.7H1564.5" stroke="#eeeeee" stroke-width="1"/>
<path d="M1075.3 252V402.8" stroke="#eeeeee" stroke-width="1"/>
<path d="M1197.6 252V402.8" stroke="#eeeeee" stroke-width="1"/>
<path d="M1319.9 252V402.8" stroke="#eeeeee" stroke-width="1"/>
<path d="M1442.2 252V402.8" stroke="#eeeeee" stroke-width="1"/>
<path d="M953 252H1564.5V402.8" stroke="#c8c8c8" fill="none" stroke-width="1"/>
<path d="M953 252V402.8H1564.5" stroke="#4a4a4a" fill="none" stroke-width="1"/>
<path d="M948 252.0H953" stroke="#555"/>
<text class="cl" transform="translate(942 255.7) scale(.89 1)" text-anchor="end">1,000,000</text>
<path d="M948 277.1H953" stroke="#555"/>
<text class="cl" transform="translate(942 280.8) scale(.89 1)" text-anchor="end">900,000</text>
<path d="M948 302.3H953" stroke="#555"/>
<text class="cl" transform="translate(942 306.0) scale(.89 1)" text-anchor="end">800,000</text>
<path d="M948 327.4H953" stroke="#555"/>
<text class="cl" transform="translate(942 331.1) scale(.89 1)" text-anchor="end">700,000</text>
<path d="M948 352.5H953" stroke="#555"/>
<text class="cl" transform="translate(942 356.2) scale(.89 1)" text-anchor="end">600,000</text>
<path d="M948 377.7H953" stroke="#555"/>
<text class="cl" transform="translate(942 381.4) scale(.89 1)" text-anchor="end">500,000</text>
<path d="M948 402.8H953" stroke="#555"/>
<text class="cl" transform="translate(942 406.5) scale(.89 1)" text-anchor="end">400,000</text>
<path d="M1013.5 255 L1135.8 255 L1258 376.2 L1380.4 365 L1502.7 355" fill="none" stroke="#f2a678" stroke-width="1.050"/>
<circle cx="1013.5" cy="255" r="1.900" fill="#ee6d48"/>
<circle cx="1135.8" cy="255" r="1.900" fill="#ee6d48"/>
<circle cx="1258" cy="376.2" r="1.900" fill="#ee6d48"/>
<circle cx="1380.4" cy="365" r="1.900" fill="#ee6d48"/>
<circle cx="1502.7" cy="355" r="1.900" fill="#ee6d48"/>
<path d="M1013.5 402.8v5" stroke="#555"/>
<text class="cx" text-anchor="end" transform="translate(1013.5 411.8) rotate(-18) scale(.9 1) translate(0 4.300)">2023 - May</text>
<path d="M1135.8 402.8v5" stroke="#555"/>
<text class="cx" text-anchor="end" transform="translate(1135.8 411.8) rotate(-18) scale(.9 1) translate(0 4.300)">2023 - Jun</text>
<path d="M1258 402.8v5" stroke="#555"/>
<text class="cx" text-anchor="end" transform="translate(1258 411.8) rotate(-18) scale(.9 1) translate(0 4.300)">2023 - Jul</text>
<path d="M1380.4 402.8v5" stroke="#555"/>
<text class="cx" text-anchor="end" transform="translate(1380.4 411.8) rotate(-18) scale(.9 1) translate(0 4.300)">2023 - Aug</text>
<path d="M1502.7 402.8v5" stroke="#555"/>
<text class="cx" text-anchor="end" transform="translate(1502.7 411.8) rotate(-18) scale(.9 1) translate(0 4.300)">2023 - Sep</text>
<rect x="943.4" y="499.6" width="621.1" height="125.89999999999998" fill="#fff"/>
<path d="M943.4 531.1H1564.5" stroke="#eeeeee" stroke-width="1"/>
<path d="M943.4 562.5H1564.5" stroke="#eeeeee" stroke-width="1"/>
<path d="M943.4 594.0H1564.5" stroke="#eeeeee" stroke-width="1"/>
<path d="M1032.1 499.6V625.5" stroke="#eeeeee" stroke-width="1"/>
<path d="M1120.9 499.6V625.5" stroke="#eeeeee" stroke-width="1"/>
<path d="M1209.6 499.6V625.5" stroke="#eeeeee" stroke-width="1"/>
<path d="M1298.3 499.6V625.5" stroke="#eeeeee" stroke-width="1"/>
<path d="M1387.0 499.6V625.5" stroke="#eeeeee" stroke-width="1"/>
<path d="M1475.8 499.6V625.5" stroke="#eeeeee" stroke-width="1"/>
<path d="M943.4 499.6H1564.5V625.5" stroke="#c8c8c8" fill="none" stroke-width="1"/>
<rect x="977.5" y="506.3" width="20.4" height="119.2" fill="#8182c9"/>
<rect x="1066.2" y="521.8" width="20.4" height="103.7" fill="#8182c9"/>
<rect x="1154.9" y="546.6" width="20.4" height="78.9" fill="#8182c9"/>
<rect x="1243.6" y="562" width="20.4" height="63.5" fill="#8182c9"/>
<rect x="1332.3" y="575.4" width="20.4" height="50.1" fill="#8182c9"/>
<rect x="1421.0" y="585" width="20.4" height="40.5" fill="#8182c9"/>
<rect x="1509.7" y="592.7" width="20.4" height="32.8" fill="#8182c9"/>
<rect x="953" y="617.5" width="20" height="8.0" fill="#2e8be0"/>
<rect x="1130.3" y="614.8" width="20" height="10.7" fill="#2e8be0"/>
<path d="M943.4 499.6V625.5H1564.5" stroke="#7d7d7d" fill="none" stroke-width="1"/>
<path d="M938.4 499.6H943.4" stroke="#555"/>
<text class="cl" transform="translate(933.4 503.3) scale(.89 1)" text-anchor="end">200,000</text>
<path d="M938.4 531.1H943.4" stroke="#555"/>
<text class="cl" transform="translate(933.4 534.8) scale(.89 1)" text-anchor="end">150,000</text>
<path d="M938.4 562.5H943.4" stroke="#555"/>
<text class="cl" transform="translate(933.4 566.2) scale(.89 1)" text-anchor="end">100,000</text>
<path d="M938.4 594.0H943.4" stroke="#555"/>
<text class="cl" transform="translate(933.4 597.7) scale(.89 1)" text-anchor="end">50,000</text>
<path d="M938.4 625.5H943.4" stroke="#555"/>
<text class="cl" transform="translate(933.4 629.2) scale(.89 1)" text-anchor="end">0</text>
<text class="cx" text-anchor="end" transform="translate(987.8 632.5) rotate(-20.500) scale(.9 1) translate(0 4.300)">Concord Litho</text>
<text class="cx" text-anchor="end" transform="translate(1076.5 632.5) rotate(-20.500) scale(.9 1) translate(0 4.300)">Aviance Airline Cargo</text>
<text class="cx" text-anchor="end" transform="translate(1165.3 632.5) rotate(-20.500) scale(.9 1) translate(0 4.300)">Automatic Data Processing Inc.</text>
<text class="cx" text-anchor="end" transform="translate(1254.0 632.5) rotate(-20.500) scale(.9 1) translate(0 4.300)">Edison Power</text>
<text class="cx" text-anchor="end" transform="translate(1342.7 632.5) rotate(-20.500) scale(.9 1) translate(0 4.300)">Asar Hardware Limited</text>
<text class="cx" text-anchor="end" transform="translate(1431.5 632.5) rotate(-20.500) scale(.9 1) translate(0 4.300)">NetJenn Toy Development</text>
<text class="cx" text-anchor="end" transform="translate(1520.2 632.5) rotate(-20.500) scale(.9 1) translate(0 4.300)">XIANGTAN Apparel</text>
<g transform="translate(1552 425)"><rect x="0" y="0" width="13" height="13" fill="#f1f1f1"/><rect x="2" y="6" width="3" height="6.500" fill="#3a7bd5"/><rect x="5.500" y="3" width="3" height="9.500" fill="#d9463e"/><rect x="9" y="1" width="3" height="11.500" fill="#4aa564"/></g>
<g transform="translate(1552 680)"><rect x="0" y="0" width="13" height="13" fill="#f1f1f1"/><rect x="2" y="6" width="3" height="6.500" fill="#3a7bd5"/><rect x="5.500" y="3" width="3" height="9.500" fill="#d9463e"/><rect x="9" y="1" width="3" height="11.500" fill="#4aa564"/></g>
</svg>
<!--CHARTS-END-->
<div id="fade"></div>
</body>
</html>
